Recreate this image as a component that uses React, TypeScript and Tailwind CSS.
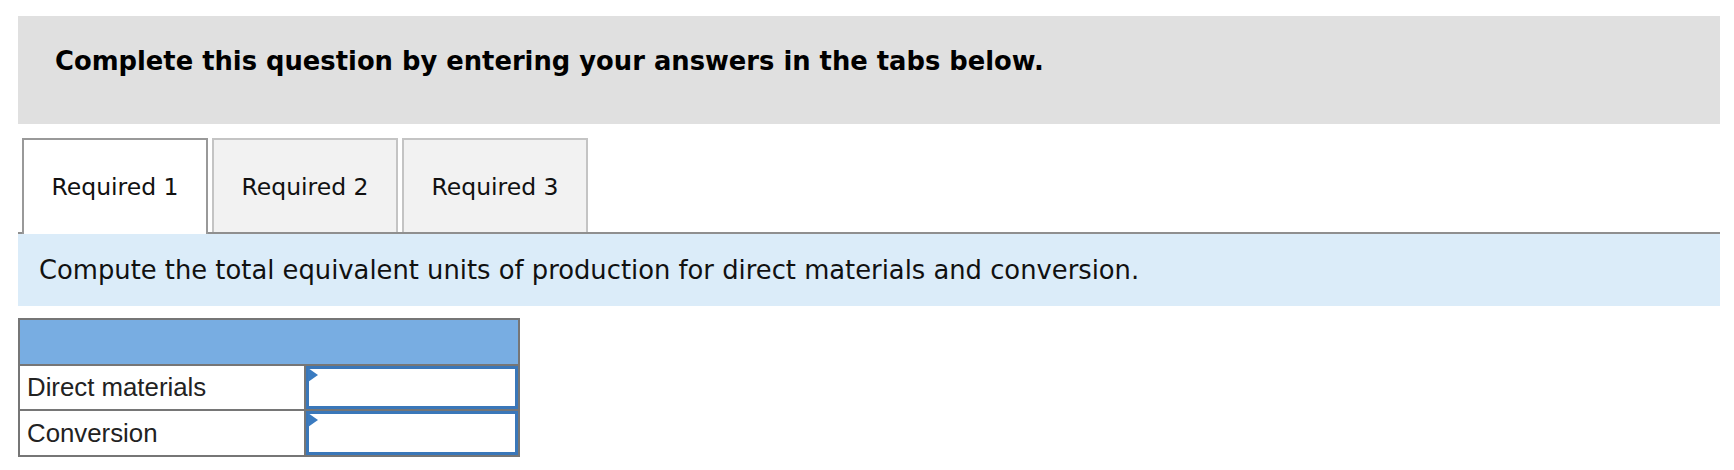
export default function App() {
  const tabs = ["Required 1", "Required 2", "Required 3"];
  const active = 0;

  return (
    <div className="w-[1734px] h-[470px] bg-white pt-[16px] pl-[18px]">
      <div className="w-[1702px]">
        {/* instructions banner */}
        <div className="h-[108px] bg-[#e0e0e0] pl-[37px] pt-[30px]">
          <h1 className="font-['DejaVu_Sans',Verdana,sans-serif] font-bold text-[25.8px] leading-[30px] text-black">
            Complete this question by entering your answers in the tabs below.
          </h1>
        </div>

        {/* tab strip */}
        <div className="mt-[14px] flex items-end gap-[4px] pl-[4px] border-b-2 border-[#8f8f8f]">
          {tabs.map((t, i) =>
            i === active ? (
              <div
                key={t}
                className="w-[186px] h-[96px] -mb-[2px] border-2 border-b-0 border-[#999999] bg-white flex items-center justify-center pt-[2px] font-['DejaVu_Sans',Verdana,sans-serif] text-[23.5px] text-[#111]"
              >
                {t}
              </div>
            ) : (
              <div
                key={t}
                className="w-[186px] h-[94px] border-2 border-b-0 border-[#c4c4c4] bg-[#f2f2f2] flex items-center justify-center pt-[3px] font-['DejaVu_Sans',Verdana,sans-serif] text-[23.5px] text-[#111]"
              >
                {t}
              </div>
            )
          )}
        </div>

        {/* question prompt */}
        <div className="h-[72px] bg-[#dbecf9] flex items-center pl-[21px] pt-[1px] font-['DejaVu_Sans',Verdana,sans-serif] text-[25.8px] text-[#111]">
          Compute the total equivalent units of production for direct materials and conversion.
        </div>

        {/* answer table */}
        <div className="mt-[12px] w-[502px] border-2 border-[#767676] font-['Liberation_Sans',Arial,sans-serif] text-[25.8px] text-[#222]">
          <div className="h-[46px] bg-[#78ade2] border-b-2 border-[#767676]" />
          {["Direct materials", "Conversion"].map((label, i) => (
            <div
              key={label}
              className={`flex ${i === 0 ? "h-[45px] border-b-2 border-[#767676]" : "h-[44px]"}`}
            >
              <div className="w-[286px] border-r-2 border-[#767676] flex items-center pl-[7px]">
                {label}
              </div>
              <div className="relative flex-1 border-[3px] border-[#3a77b9] bg-white">
                <svg
                  className="absolute left-[-1px] top-[-1px]"
                  width="10"
                  height="14"
                  viewBox="0 0 10 14"
                >
                  <polygon points="0,0 10,7 0,14" fill="#3a7bc0" />
                </svg>
              </div>
            </div>
          ))}
        </div>
      </div>
    </div>
  );
}
